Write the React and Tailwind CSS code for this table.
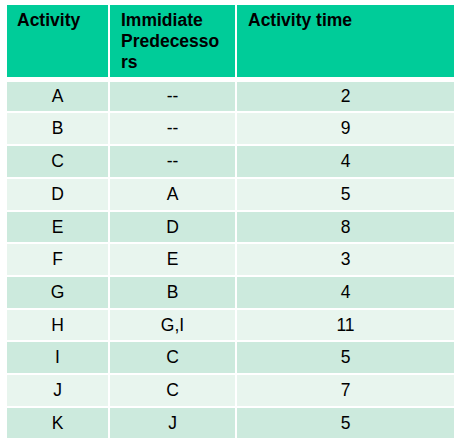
const rows = [
  { act: 'A', pred: '--', time: '2', h: 'h-[29px]' },
  { act: 'B', pred: '--', time: '9', h: 'h-[31px]' },
  { act: 'C', pred: '--', time: '4', h: 'h-[31px]' },
  { act: 'D', pred: 'A', time: '5', h: 'h-[31px]' },
  { act: 'E', pred: 'D', time: '8', h: 'h-[30px]' },
  { act: 'F', pred: 'E', time: '3', h: 'h-[31px]' },
  { act: 'G', pred: 'B', time: '4', h: 'h-[31px]' },
  { act: 'H', pred: 'G,I', time: '11', h: 'h-[30px]' },
  { act: 'I', pred: 'C', time: '5', h: 'h-[31px]' },
  { act: 'J', pred: 'C', time: '7', h: 'h-[31px]' },
  { act: 'K', pred: 'J', time: '5', h: 'h-[30px]' },
];

const cols = 'grid grid-cols-[101px_125px_217px] gap-x-[2px]';

export default function App() {
  return (
    <div className="w-[463px] h-[444px] bg-white pl-[7px] pt-[5px] font-['Liberation_Sans',Arial,sans-serif] text-[17.5px] text-black">
      <div className={`${cols} h-[72px] font-bold leading-[21px]`}>
        <div className="bg-[#00cc99] pl-[10px] pt-[5px]">Activity</div>
        <div className="bg-[#00cc99] pl-[11px] pr-[11px] pt-[5px] break-words">Immidiate Predecessors</div>
        <div className="bg-[#00cc99] pl-[11px] pt-[5px]">Activity time</div>
      </div>
      <div className="mt-[5px] flex flex-col gap-y-[2px]">
        {rows.map((r, i) => {
          const bg = i % 2 === 0 ? 'bg-[#cceadd]' : 'bg-[#e8f5ee]';
          return (
            <div key={r.act} className={`${cols} ${r.h}`}>
              <div className={`${bg} flex items-center justify-center`}>{r.act}</div>
              <div className={`${bg} flex items-center justify-center`}>{r.pred}</div>
              <div className={`${bg} flex items-center justify-center`}>{r.time}</div>
            </div>
          );
        })}
      </div>
    </div>
  );
}
